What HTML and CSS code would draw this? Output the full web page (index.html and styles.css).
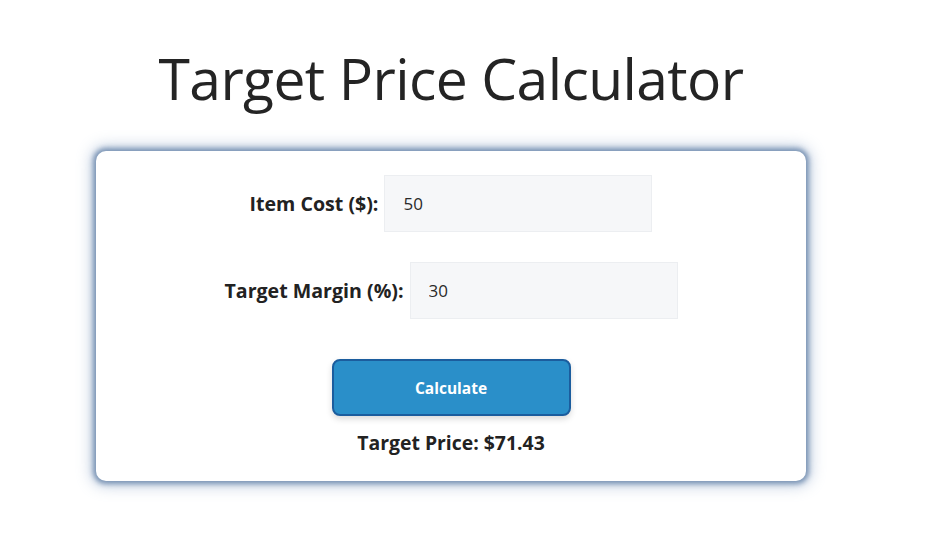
FILE: index.html
```html
<!DOCTYPE html>
<html lang="en">
<head>
<meta charset="utf-8">
<title>Target Price Calculator</title>
<link rel="stylesheet" href="styles.css">
</head>
<body>
<div class="page">
  <h1 class="title">Target Price Calculator</h1>
  <div class="card">
    <div class="row">
      <label class="label" for="cost">Item Cost ($):</label>
      <input class="field" id="cost" type="text" value="50">
    </div>
    <div class="row">
      <label class="label" for="margin">Target Margin (%):</label>
      <input class="field" id="margin" type="text" value="30">
    </div>
    <button class="btn" type="button">Calculate</button>
    <div class="result">Target Price: $71.43</div>
  </div>
</div>
</body>
</html>
```

FILE: styles.css
```css
html, body {
  margin: 0;
  padding: 0;
  background: #ffffff;
}
body {
  font-family: "Open Sans", "Noto Sans", "Liberation Sans", sans-serif;
  color: #222222;
}
.page {
  width: 902px;
  padding-bottom: 50px;
  display: flex;
  flex-direction: column;
  align-items: center;
}
.title {
  margin: 33px 0 0 0;
  font-size: 57px;
  font-weight: 400;
  line-height: 90px;
  color: #242424;
  letter-spacing: -0.6px;
}
.card {
  margin-top: 28px;
  width: 710px;
  height: 330px;
  box-sizing: border-box;
  background: #ffffff;
  border-radius: 10px;
  box-shadow: 0 0 5px 3px rgba(100, 130, 168, 0.8), 0 0 14px 6px rgba(140, 165, 200, 0.45);
  padding-top: 24px;
  display: flex;
  flex-direction: column;
  align-items: center;
}
.row {
  display: flex;
  align-items: center;
  gap: 6px;
  margin-bottom: 30px;
}
.label {
  font-size: 19.6px;
  font-weight: 700;
  color: #222222;
}
.field {
  width: 268px;
  height: 57px;
  box-sizing: border-box;
  border: 1px solid #eceef1;
  background: #f6f7f9;
  padding: 0 18px;
  font-family: inherit;
  font-size: 17px;
  color: #2a2a2a;
  outline: none;
}
.btn {
  margin-top: 10px;
  width: 239px;
  height: 57px;
  background: #2a8fc9;
  border: 2px solid #1b5d9e;
  border-radius: 8px;
  color: #ffffff;
  font-family: inherit;
  font-size: 15.5px;
  font-weight: 700;
  box-shadow: 0 3px 6px rgba(0, 0, 0, 0.15);
}
.result {
  margin-top: 14px;
  font-size: 19.4px;
  font-weight: 700;
  line-height: 26px;
  color: #222222;
}
```
